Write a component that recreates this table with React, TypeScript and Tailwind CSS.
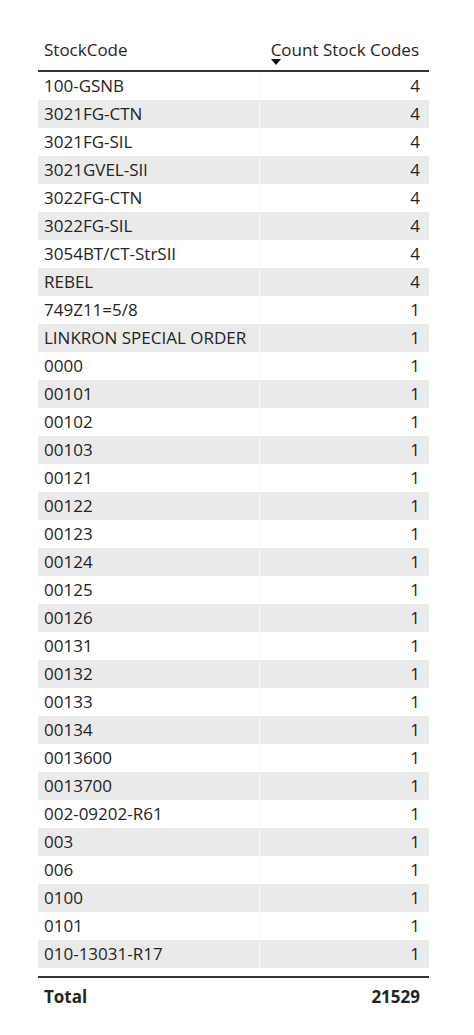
import React from "react";

const rows: [string, number][] = [
  ["100-GSNB", 4],
  ["3021FG-CTN", 4],
  ["3021FG-SIL", 4],
  ["3021GVEL-SIl", 4],
  ["3022FG-CTN", 4],
  ["3022FG-SIL", 4],
  ["3054BT/CT-StrSIl", 4],
  ["REBEL", 4],
  ["749Z11=5/8", 1],
  ["LINKRON SPECIAL ORDER", 1],
  ["0000", 1],
  ["00101", 1],
  ["00102", 1],
  ["00103", 1],
  ["00121", 1],
  ["00122", 1],
  ["00123", 1],
  ["00124", 1],
  ["00125", 1],
  ["00126", 1],
  ["00131", 1],
  ["00132", 1],
  ["00133", 1],
  ["00134", 1],
  ["0013600", 1],
  ["0013700", 1],
  ["002-09202-R61", 1],
  ["003", 1],
  ["006", 1],
  ["0100", 1],
  ["0101", 1],
  ["010-13031-R17", 1],
];

export default function App() {
  return (
    <div
      className="w-[474px] h-[1035px] bg-white text-[#252423] pt-[37px] pl-[38px]"
      style={{ fontFamily: '"Open Sans", "Noto Sans", sans-serif' }}
    >
      <div className="w-[391px] flex flex-col">
        {/* Header */}
        <div className="flex h-[35px] border-b-2 border-[#333333] text-[17px] leading-[24px]">
          <div className="w-[222px] pl-[6px] flex items-start pt-[1px]">StockCode</div>
          <div className="flex-1 flex items-start justify-end pr-[10px] pt-[1px]">
            <span className="relative">
              Count Stock Codes
              <span className="absolute left-[0px] top-[21px] w-0 h-0 border-l-[5px] border-r-[5px] border-t-[6px] border-l-transparent border-r-transparent border-t-[#111111]" />
            </span>
          </div>
        </div>
        {/* Body */}
        <div className="flex flex-col">
          {rows.map(([code, count], i) => (
            <div
              key={code}
              className={`flex h-[28px] items-center text-[17px] ${i % 2 === 1 ? "bg-[#eaeaea]" : "bg-white"}`}
            >
              <div className="w-[222px] h-full flex items-center pl-[6px] border-r border-[#f7f7f7] whitespace-nowrap">
                {code}
              </div>
              <div className="flex-1 h-full flex items-center justify-end pr-[9px]">{count}</div>
            </div>
          ))}
          <div className="h-[8px] overflow-hidden">
            <div className="flex h-[28px] items-center text-[17px] bg-white">
              <div className="w-[222px] pl-[6px]">010-13032-R17</div>
              <div className="flex-1 flex justify-end pr-[9px]">1</div>
            </div>
          </div>
        </div>
        {/* Total */}
        <div className="flex h-[40px] items-center border-t-2 border-[#333333] text-[17px] font-bold">
          <div className="w-[222px] pl-[6px]">Total</div>
          <div className="flex-1 flex justify-end pr-[9px]">21529</div>
        </div>
      </div>
    </div>
  );
}
